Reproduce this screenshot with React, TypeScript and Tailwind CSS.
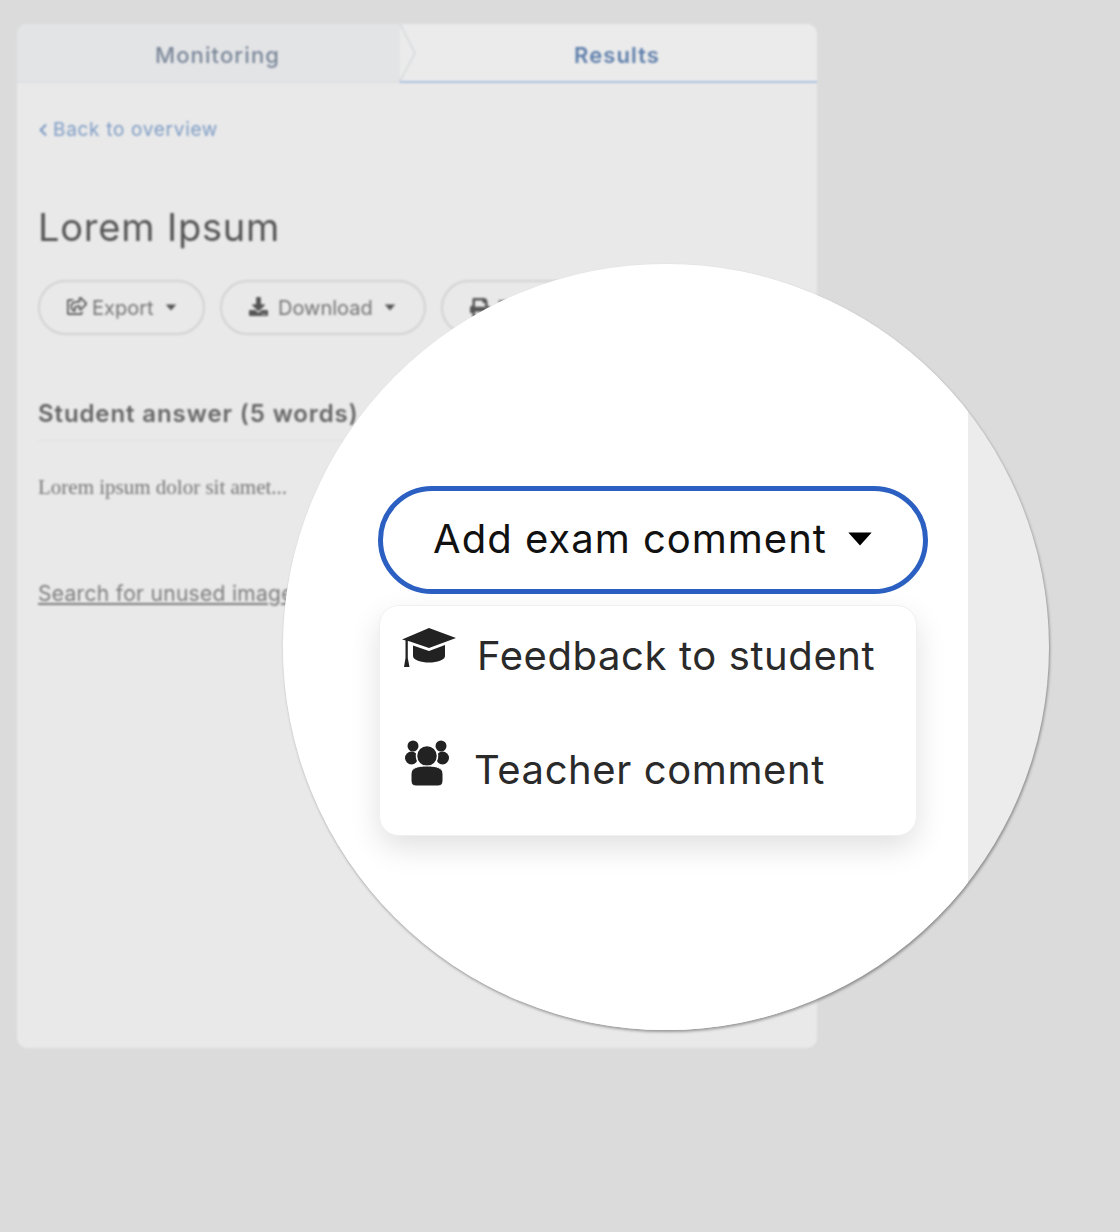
import { FaChevronLeft, FaDownload, FaPrint, FaRegShareSquare } from 'react-icons/fa';

function Caret({ className }: { className: string }) {
  return (
    <svg viewBox="0 0 10 6" className={className} fill="currentColor">
      <path d="M0.5 0.5h9L5 5.5z" />
    </svg>
  );
}

function CapIcon() {
  return (
    <svg viewBox="0 0 54 40" className="w-[54px] h-[40px] text-[#222]" fill="currentColor">
      <path d="M27 0 L54 10 L27 20 L8 13.5 L0 11.5 Z" />
      <path d="M11 17.5 L27 23 L43 17 V28 C43 32 35 34.5 27 34.5 C19 34.5 11 32 11 28 Z" />
      <path d="M3.5 11.5 L5.8 12.2 V30 L7.5 39 H2 L3.5 30 Z" />
    </svg>
  );
}

function PeopleIcon() {
  return (
    <svg viewBox="0 0 46 46" className="w-[46px] h-[46px] -mt-[3px] text-[#222]" fill="currentColor">
      <circle cx="9" cy="6" r="5.5" />
      <circle cx="37" cy="6" r="5.5" />
      <circle cx="7.5" cy="18" r="6.5" />
      <circle cx="38.5" cy="18" r="6.5" />
      <circle cx="23" cy="16" r="10.5" stroke="#fff" strokeWidth="1.5" />
      <path d="M7 34c0-6 6-8 16-8s16 2 16 8v7c0 3-2 5-5 5H12c-3 0-5-2-5-5z" stroke="#fff" strokeWidth="1" />
    </svg>
  );
}

function PillButton({ icon, label, width, pad }: { icon: React.ReactNode; label: string; width: string; pad: string }) {
  return (
    <div className={`h-[55px] ${width} ${pad} shrink-0 rounded-full border-2 border-[#d2d2d2] flex items-center gap-[7px] text-[20px] text-[#757575]`}>
      {icon}
      <span>{label}</span>
      <Caret className="w-[12px] h-[7px] ml-[4px] text-[#555]" />
    </div>
  );
}

export default function App() {
  return (
    <main className="relative w-[1120px] h-[1232px] overflow-hidden bg-[#dbdbdb] font-['Inter',sans-serif]">
      {/* blurred page behind the lens */}
      <div className="blur-[1px] pt-[24px] pl-[17px]">
        <section className="w-[800px] h-[1024px] rounded-[10px] bg-[#e9e9e9] overflow-hidden">
          <div className="relative flex h-[59px] text-[22px] tracking-[1.1px]">
            <div className="w-[383px] bg-[#e3e4e6] border-b-2 border-[#dde0e3] flex items-center justify-center text-[#7a8799] font-medium pl-[18px] pt-[5px]">
              Monitoring
            </div>
            <div className="flex-1 bg-[#ebebeb] border-b-2 border-[#a9c1df] flex items-center justify-center font-semibold text-[#5f7fab] pt-[5px] pl-[17px]">
              Results
            </div>
            <svg viewBox="0 0 20 57" className="absolute left-[382px] top-0 w-[20px] h-[57px]" fill="#ebebeb" stroke="#d5d7da" strokeWidth="1.5">
              <path d="M1 0 L16 29 L1 57 L20 57 L20 0 Z" stroke="none" />
              <path d="M1 0 L16 29 L1 57" fill="none" />
            </svg>
          </div>

          <div className="pl-[21px]">
            <div className="mt-[35px] flex items-center gap-[5px] text-[19px] leading-[24px] tracking-[0.7px] text-[#7e9cc5]">
              <FaChevronLeft className="w-[10px] h-[14px]" />
              <span>Back to overview</span>
            </div>
            <h1 className="mt-[61px] text-[38px] leading-[48px] tracking-[0.8px] text-[#555]">Lorem Ipsum</h1>
            <div className="mt-[29px] flex gap-[15px]">
              <PillButton width="w-[167px]" pad="pl-[27px]" label="Export" icon={<FaRegShareSquare className="w-[20px] h-[18px] mb-[3px] mr-[-2px] text-[#555]" />} />
              <PillButton width="w-[206px]" pad="pl-[26px]" label="Download" icon={<FaDownload className="w-[21px] h-[19px] mb-[3px] mr-[2px] text-[#555]" />} />
              <PillButton width="w-[180px]" pad="pl-[27px]" label="Print" icon={<FaPrint className="w-[20px] h-[20px] text-[#555]" />} />
            </div>
            <h2 className="mt-[63px] text-[24px] leading-[32px] tracking-[0.9px] font-semibold text-[#666]">Student answer (5 words)</h2>
            <div className="mt-[10px] mr-[21px] h-px bg-[#e0e0e0]" />
            <p className="mt-[33px] font-['Liberation_Serif',serif] text-[21px] leading-[26px] text-[#777]">Lorem ipsum dolor sit amet...</p>
            <p className="mt-[81px] text-[21px] leading-[26px] tracking-[0.3px] text-[#7c7c7c] underline">Search for unused images</p>
          </div>
        </section>
      </div>

      {/* magnifier */}
      <div className="absolute left-[283px] top-[264px] w-[766px] h-[766px] rounded-full overflow-hidden bg-[#ececec] shadow-[1px_2px_3px_rgba(0,0,0,0.35)]">
        <div className="w-[685px] h-full bg-white pl-[95px] pt-[222px]">
          <div className="w-[550px] h-[108px] rounded-full border-[5px] border-[#2b60c2] flex items-center justify-center gap-[20px] text-[40px] tracking-[1px] text-[#111] pb-[2px]">
            <span>Add exam comment</span>
            <Caret className="w-[26px] h-[16px] text-black" />
          </div>
          <div className="mt-[11px] ml-[1px] w-[538px] h-[231px] rounded-[20px] border border-[#f0f0f0] bg-white shadow-[0_12px_30px_rgba(0,0,0,0.12)] text-[40px] tracking-[0.6px] text-[#2a2a2a]">
            <div className="flex pl-[22px] pt-[22px]">
              <CapIcon />
              <span className="ml-[21px] mt-[1px] leading-[54px]">Feedback to student</span>
            </div>
            <div className="flex pl-[24px] pt-[60px]">
              <PeopleIcon />
              <span className="ml-[24px] leading-[54px]">Teacher comment</span>
            </div>
          </div>
        </div>
      </div>
    </main>
  );
}
